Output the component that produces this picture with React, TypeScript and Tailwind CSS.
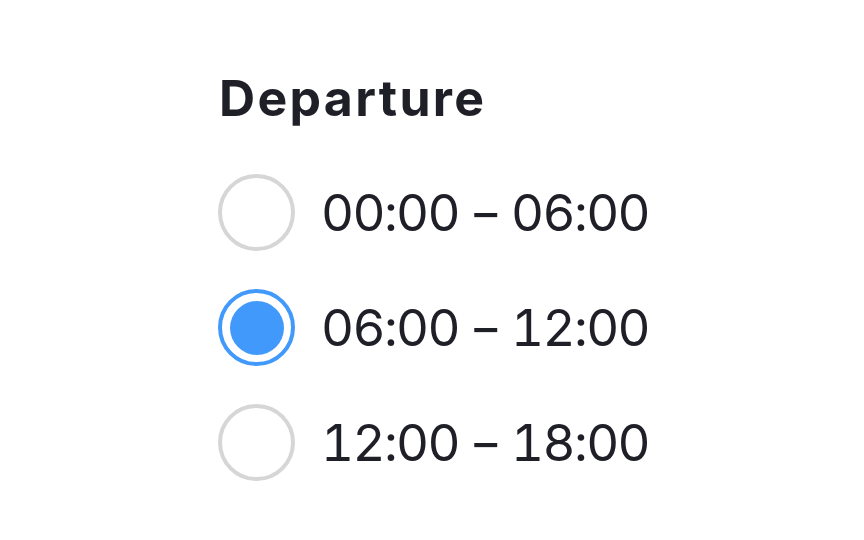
import React from "react";

const options = [
  { from: "00:00", to: "06:00", checked: false },
  { from: "06:00", to: "12:00", checked: true },
  { from: "12:00", to: "18:00", checked: false },
];

export default function App() {
  return (
    <div
      className="w-[864px] h-[540px] bg-white flex flex-col pl-[218px] pt-[70px]"
      style={{ fontFamily: "Inter, 'Noto Sans', sans-serif" }}
    >
      <h2 className="text-[50px] leading-[56px] font-bold text-[#1f1f27] pl-[1px] tracking-[2.3px]">
        Departure
      </h2>
      <div className="flex flex-col gap-[38px] mt-[48px]">
        {options.map((o) => (
          <label key={o.from} className="flex items-center gap-[26px] h-[77px]">
            {o.checked ? (
              <span className="w-[77px] h-[77px] rounded-full border-[4.5px] border-[#4199fb] flex items-center justify-center">
                <span className="w-[54px] h-[54px] rounded-full bg-[#4199fb]" />
              </span>
            ) : (
              <span className="w-[77px] h-[77px] rounded-full border-[4.5px] border-[#d6d6d6]" />
            )}
            <span className="text-[51px] leading-none text-[#1f1f27] tracking-[-1.6px] tabular-nums whitespace-nowrap">
              {o.from}{" "}
              <span className="inline-block scale-x-[0.9] mx-[2px]">–</span>{" "}
              {o.to}
            </span>
          </label>
        ))}
      </div>
    </div>
  );
}
